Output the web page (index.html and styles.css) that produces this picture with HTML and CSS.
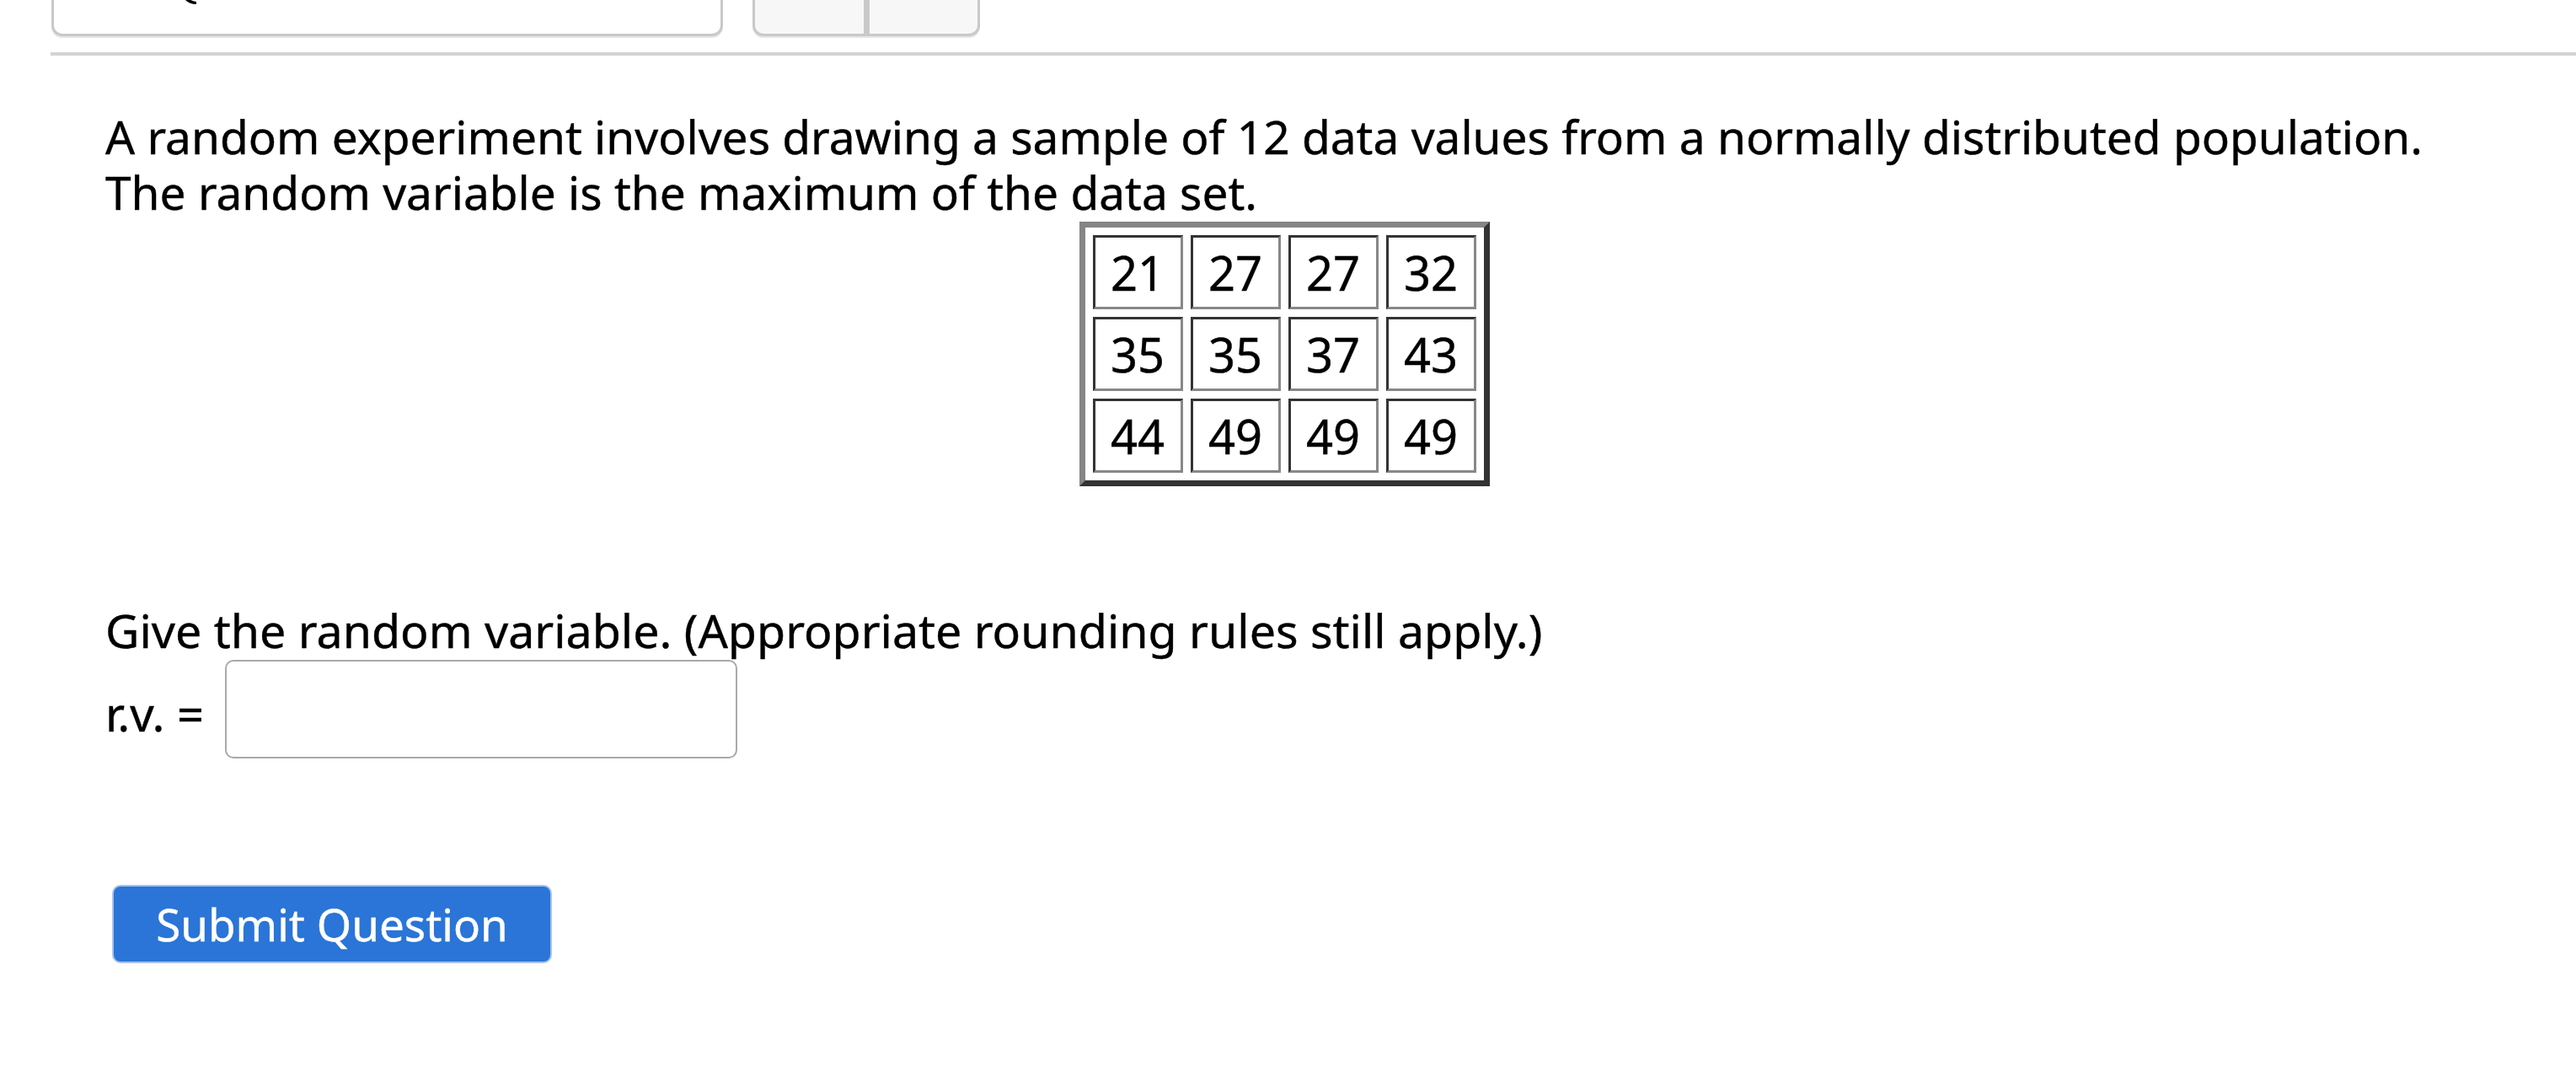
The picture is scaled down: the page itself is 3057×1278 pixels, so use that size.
FILE: index.html
```html
<!DOCTYPE html>
<html lang="en">
<head>
<meta charset="utf-8">
<title>Question</title>
<link rel="stylesheet" href="styles.css">
</head>
<body>
<div class="toolbar">
  <div class="selector">
    <svg class="glyph" width="20" height="12" viewBox="0 0 20 12"><path d="M1 0 Q6 9 17 9 L17 6 Q9 5 6 0 Z" fill="#000"/></svg>
  </div>
  <div class="seg-group">
    <div class="seg seg-first"></div>
    <div class="seg"></div>
  </div>
</div>
<div class="rule"></div>
<div class="question">
  <p class="prompt"><span class="line">A random experiment involves drawing a sample of 12 data values from a normally distributed population.</span><span class="line">The random variable is the maximum of the data set.</span></p>
  <table class="data">
    <tr><td>21</td><td>27</td><td>27</td><td>32</td></tr>
    <tr><td>35</td><td>35</td><td>37</td><td>43</td></tr>
    <tr><td>44</td><td>49</td><td>49</td><td>49</td></tr>
  </table>
  <p class="ask">Give the random variable. (Appropriate rounding rules still apply.)</p>
  <div class="answer-row">
    <span class="label">r.v. =</span>
    <input class="answer" type="text" aria-label="r.v.">
  </div>
  <button class="submit" type="button">Submit Question</button>
</div>
</body>
</html>
```
FILE: styles.css
```css
html, body {
  margin: 0;
  padding: 0;
  background: #ffffff;
}
body {
  font-family: "Noto Sans", "Lato", sans-serif;
  color: #000;
  overflow: hidden;
  -webkit-text-stroke: 0.4px #000;
}
.toolbar {
  display: flex;
  gap: 35px;
  margin-top: -37px;
  padding-left: 61px;
}
.selector {
  box-sizing: border-box;
  width: 797px;
  height: 80px;
  border: 3px solid #c9c9c9;
  border-radius: 13px;
  background: #fff;
  box-shadow: 0 2px 0 #e6e6e6;
}
.glyph {
  display: block;
  margin-left: 152px;
  margin-top: 30px;
}
.seg-group {
  box-sizing: border-box;
  display: flex;
  width: 270px;
  height: 80px;
  border: 3px solid #c9c9c9;
  border-radius: 13px;
  background: #f7f7f7;
  overflow: hidden;
  box-shadow: 0 2px 0 #e6e6e6;
}
.seg {
  flex: 1;
}
.seg-first {
  border-right: 7px solid #c9c9c9;
}
.rule {
  margin-left: 60px;
  margin-top: 19px;
  height: 4px;
  background: #d3d3d3;
}
.question {
  padding: 0 134px 0 125px;
}
.prompt {
  margin: 63px 0 0 0;
  font-size: 55px;
  line-height: 66px;
}
.line {
  display: block;
  height: 66px;
}
.data {
  margin: 2px auto 0 auto;
  border-collapse: separate;
  border-spacing: 9px;
  border-style: solid;
  border-width: 7px;
  border-color: #858585 #333333 #333333 #858585;
}
.data td {
  box-sizing: border-box;
  width: 107px;
  height: 88px;
  padding: 0;
  text-align: center;
  vertical-align: middle;
  font-size: 56px;
  line-height: 66px;
  border-style: solid;
  border-width: 3px;
  border-color: #333333 #888888 #888888 #333333;
}
.ask {
  margin: 138px 0 0 0;
  font-size: 55.5px;
  line-height: 66px;
}
.answer-row {
  display: flex;
  align-items: flex-start;
  margin-top: 2px;
}
.label {
  flex: 0 0 142px;
  margin-top: 33px;
  font-size: 56px;
  line-height: 60px;
}
.answer {
  box-sizing: border-box;
  width: 608px;
  height: 117px;
  margin: 0;
  border: 2px solid #a9a9a9;
  border-radius: 10px;
  background: #fff;
}
.submit {
  display: block;
  box-sizing: border-box;
  margin: 150px 0 0 8px;
  width: 522px;
  height: 93px;
  padding: 0;
  background: #2a75d7;
  color: #fff;
  -webkit-text-stroke: 0.4px #fff;
  border: 2px solid #a9c3ea;
  border-radius: 10px;
  font-family: "Noto Sans", "Lato", sans-serif;
  font-size: 53px;
}
```
